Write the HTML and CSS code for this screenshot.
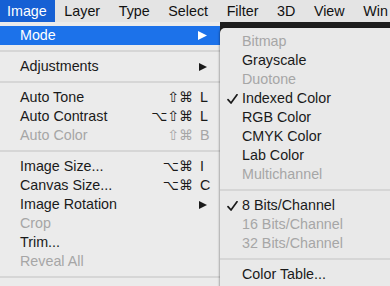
FILE: index.html
```html
<!DOCTYPE html>
<html>
<head>
<meta charset="utf-8">
<link rel="stylesheet" href="styles.css">
</head>
<body>
<div class="menubar">
  <span class="mb-item first active">Image</span>
  <span class="mb-item">Layer</span>
  <span class="mb-item">Type</span>
  <span class="mb-item">Select</span>
  <span class="mb-item">Filter</span>
  <span class="mb-item">3D</span>
  <span class="mb-item">View</span>
  <span class="mb-item">Win</span>
</div>
<div class="stage">
  <div class="menu main">
    <div class="item hl"><span class="label">Mode</span><svg class="arrow" width="9" height="9" viewBox="0 0 9 9"><polygon points="0,0 9,4.5 0,9" fill="#fff"/></svg></div>
    <div class="sep"></div>
    <div class="item"><span class="label">Adjustments</span><svg class="arrow" width="8" height="8" viewBox="0 0 8 8"><polygon points="0,0 8,4 0,8" fill="#1a1a1a"/></svg></div>
    <div class="sep"></div>
    <div class="item"><span class="label">Auto Tone</span><span class="sc"><span class="m">⇧⌘</span><span class="k">L</span></span></div>
    <div class="item"><span class="label">Auto Contrast</span><span class="sc"><span class="m">⌥⇧⌘</span><span class="k">L</span></span></div>
    <div class="item dis"><span class="label">Auto Color</span><span class="sc"><span class="m">⇧⌘</span><span class="k">B</span></span></div>
    <div class="sep"></div>
    <div class="item"><span class="label">Image Size...</span><span class="sc"><span class="m">⌥⌘</span><span class="k">I</span></span></div>
    <div class="item"><span class="label">Canvas Size...</span><span class="sc"><span class="m">⌥⌘</span><span class="k">C</span></span></div>
    <div class="item"><span class="label">Image Rotation</span><svg class="arrow" width="8" height="8" viewBox="0 0 8 8"><polygon points="0,0 8,4 0,8" fill="#1a1a1a"/></svg></div>
    <div class="item dis"><span class="label">Crop</span></div>
    <div class="item"><span class="label">Trim...</span></div>
    <div class="item dis"><span class="label">Reveal All</span></div>
    <div class="sep"></div>
  </div>
  <div class="menu sub">
    <div class="item dis"><span class="gut"></span>Bitmap</div>
    <div class="item"><span class="gut"></span>Grayscale</div>
    <div class="item dis"><span class="gut"></span>Duotone</div>
    <div class="item"><span class="gut"><svg width="11" height="10" viewBox="0 0 11 10"><path d="M1 5.6 L4 9 L10 0.8" fill="none" stroke="#1a1a1a" stroke-width="1.7" stroke-linecap="round" stroke-linejoin="round"/></svg></span>Indexed Color</div>
    <div class="item"><span class="gut"></span>RGB Color</div>
    <div class="item"><span class="gut"></span>CMYK Color</div>
    <div class="item"><span class="gut"></span>Lab Color</div>
    <div class="item dis"><span class="gut"></span>Multichannel</div>
    <div class="sep"></div>
    <div class="item"><span class="gut"><svg width="11" height="10" viewBox="0 0 11 10"><path d="M1 5.6 L4 9 L10 0.8" fill="none" stroke="#1a1a1a" stroke-width="1.7" stroke-linecap="round" stroke-linejoin="round"/></svg></span>8 Bits/Channel</div>
    <div class="item dis"><span class="gut"></span>16 Bits/Channel</div>
    <div class="item dis"><span class="gut"></span>32 Bits/Channel</div>
    <div class="sep"></div>
    <div class="item"><span class="gut"></span>Color Table...</div>
  </div>
</div>
</body>
</html>
```
FILE: styles.css
```css
html, body {
  margin: 0;
  padding: 0;
  width: 390px;
  height: 286px;
  overflow: hidden;
}
body {
  background: #1e1e1e;
  font-family: "Liberation Sans", Arial, sans-serif;
  font-size: 14.3px;
  color: #1a1a1a;
}
.menubar {
  display: flex;
  height: 22px;
  background: #e4e4e4;
  white-space: nowrap;
  overflow: hidden;
}
.mb-item {
  padding: 1px 9.3px 0;
  line-height: 21px;
  color: #111;
}
.mb-item.first {
  padding-left: 7px;
  padding-right: 8.3px;
}
.mb-item.active {
  background: #1660d4;
  color: #fff;
}
.stage {
  display: flex;
  align-items: flex-start;
}
.menu {
  background: #ebebeb;
  padding-top: 4px;
}
.main {
  width: 220px;
  flex: none;
  height: 270px;
}
.sub {
  width: 180px;
  flex: none;
  margin-top: 6px;
  border-radius: 5px 5px 0 0;
  background: #e9e9e9;
  box-shadow: -1px 0 2px rgba(0,0,0,0.28);
  height: 258px;
  position: relative;
}
.item {
  display: flex;
  align-items: center;
  height: 19px;
  line-height: 19px;
  white-space: nowrap;
}
.main .item {
  padding: 0 6px 0 20px;
}
.item .label {
  flex: 1;
}
.item.hl {
  background: #1c72ea;
  color: #fff;
}
.item.dis {
  color: #a6a6a6;
}
.arrow {
  margin-right: 7px;
  flex: none;
}
.sc {
  display: flex;
  align-items: center;
}
.sc .m {
  font-family: "DejaVu Sans", sans-serif;
  font-size: 14px;
  letter-spacing: 0;
}
.sc .k {
  display: inline-block;
  width: 14px;
  padding-left: 7px;
}
.gut {
  display: inline-flex;
  align-items: center;
  width: 22px;
  height: 19px;
  flex: none;
  padding-left: 7px;
  box-sizing: border-box;
}
.gut svg {
  margin-top: 1px;
}
.sep {
  height: 12px;
  display: flex;
  align-items: center;
}
.sep::before {
  content: "";
  display: block;
  width: 100%;
  height: 2px;
  background: #d6d6d6;
}
```
